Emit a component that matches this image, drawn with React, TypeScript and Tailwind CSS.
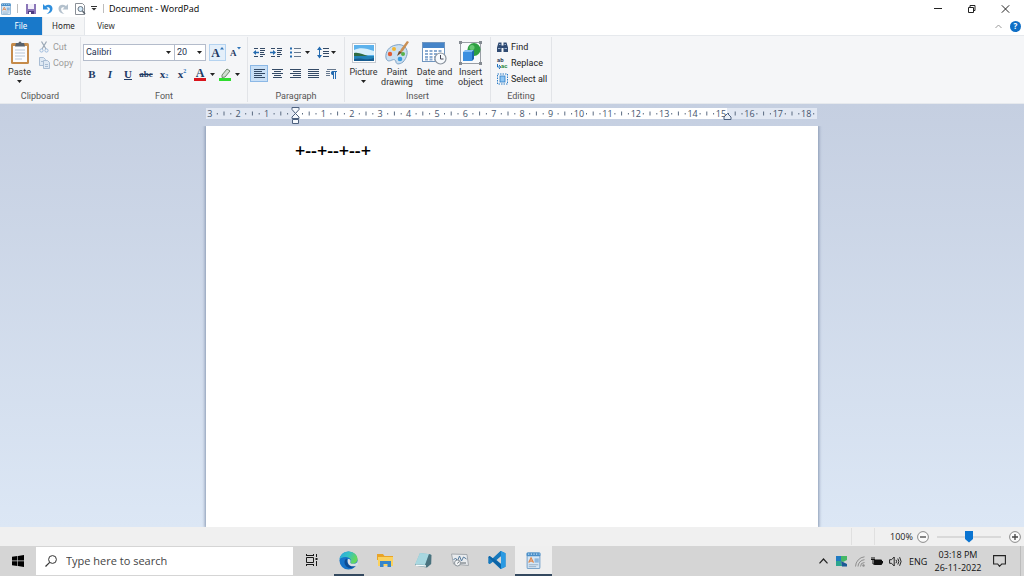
import { useState, type ReactNode } from "react";

type IconProps = { w: number; h: number; box?: string; children: ReactNode };

function Icon({ w, h, box, children }: IconProps) {
  return (
    <svg width={w} height={h} viewBox={box ?? `0 0 ${w} ${h}`} fill="none" aria-hidden className="shrink-0">
      {children}
    </svg>
  );
}

function Caret() {
  return (
    <Icon w={5} h={3}>
      <path d="M0 0h5L2.5 3z" fill="#222" />
    </Icon>
  );
}

/* ---------- title bar ---------- */

function WordPadIcon({ size }: { size: number }) {
  return (
    <Icon w={size} h={size} box="0 0 16 16">
      <rect x="2" y="1" width="12" height="14.5" rx="1" fill="#d5e6f5" stroke="#7aa5cb" />
      <rect x="1.500" y="0.5" width="13" height="3.5" rx="1" fill="#4a8fc9" />
      <path d="M3 2h1M5.500 2h1M8 2h1M10.500 2h1M13 2h.6" stroke="#d8ebfa" />
      <path d="M3.500 10 5.700 5.500 8 10M4.300 8.600h2.800" stroke="#e0874c" strokeWidth="1.100" />
      <rect x="9" y="6" width="4" height="4" fill="#8db7de" />
      <path d="M3.500 12h9M3.500 13.800h7" stroke="#8fa9c2" strokeWidth=".8" />
    </Icon>
  );
}

function TitleBar() {
  return (
    <header className="flex h-[17px] shrink-0 items-center bg-white">
      <div className="flex items-center">
        <WordPadIcon size={12} />
        <span className="ml-[5px] h-[9px] w-px bg-[#bdbdbd]" />
        <button aria-label="Save" className="ml-[7px]">
          <Icon w={12} h={12}>
            <path d="M1 1h10v10H1z" fill="#8b76b8" />
            <path d="M3 1h6v5H3z" fill="#f3f0fa" />
            <path d="M3 8h6v3H3z" fill="#4d3b80" />
            <path d="M4 9h2v2H4z" fill="#fff" />
          </Icon>
        </button>
        <button aria-label="Undo" className="ml-[5px]">
          <Icon w={11} h={12}>
            <path d="M1 1v5.500h5.500L4.600 4.600C7 3.600 8.200 5 7.800 7 7.500 8.800 6 10 4.500 11c3-.3 6-2 6-5.500C10.500 2 6.500.5 3 3z" fill="#2f8fdd" />
          </Icon>
        </button>
        <button aria-label="Redo" className="ml-[5px]">
          <Icon w={11} h={12}>
            <path d="M10 1v5.500H4.500l1.900-1.900C4 3.600 2.800 5 3.200 7c.3 1.800 1.800 3 3.300 4-3-.3-6-2-6-5.500C.5 2 4.500.5 8 3z" fill="#b4c1cd" />
          </Icon>
        </button>
        <button aria-label="Print preview" className="ml-[6px]">
          <Icon w={11} h={12}>
            <path d="M.5.5h7l2 2v9h-9z" fill="#fff" stroke="#8a8f96" />
            <circle cx="5.500" cy="6" r="2.500" fill="#d3eafa" stroke="#6c7783" />
            <path d="m7.500 8 2.500 3" stroke="#5b6570" strokeWidth="1.400" />
          </Icon>
        </button>
        <button aria-label="Customize toolbar" className="ml-[5px]">
          <Icon w={6} h={5}>
            <path d="M0 .5h6" stroke="#333" />
            <path d="M.5 2h5L3 4.500z" fill="#333" />
          </Icon>
        </button>
        <span className="ml-[6px] h-[9px] w-px bg-[#bdbdbd]" />
      </div>
      <h1 className="ml-[5px] text-[9px] leading-3 text-black">Document - WordPad</h1>
      <div className="ml-auto flex items-center gap-[25px] pr-[14px]">
        <button aria-label="Minimize">
          <Icon w={8} h={8}>
            <path d="M0 3.500h8" stroke="#222" />
          </Icon>
        </button>
        <button aria-label="Restore">
          <Icon w={9} h={8}>
            <path d="M1.500 2.500h5v5h-5zM3 2V.5h5v5H7" stroke="#222" />
          </Icon>
        </button>
        <button aria-label="Close">
          <Icon w={9} h={8}>
            <path d="m.8.3 7.400 7.400M8.200.3.800 7.700" stroke="#222" />
          </Icon>
        </button>
      </div>
    </header>
  );
}

function Tabs() {
  return (
    <nav className="flex h-[18px] shrink-0 items-stretch bg-white font-['Noto_Sans','Open_Sans',sans-serif] text-[8px]">
      <button className="w-[42px] bg-[#1979ca] text-white">File</button>
      <button className="w-[43px] border-x border-[#e3e6ea] bg-[#f5f6f7] text-[#222]">Home</button>
      <button className="w-[42px] text-[#333]">View</button>
      <div className="ml-auto flex items-center gap-[8px] pr-[3px]">
        <button aria-label="Minimize ribbon">
          <Icon w={7} h={5}>
            <path d="m.5 4 3-3 3 3" stroke="#999" />
          </Icon>
        </button>
        <button aria-label="Help" className="flex size-[11px] items-center justify-center rounded-full bg-[#0f6fc6] text-[8px] font-bold leading-none text-white">
          ?
        </button>
      </div>
    </nav>
  );
}

/* ---------- ribbon ---------- */

function Group({ title, className, children }: { title: string; className: string; children: ReactNode }) {
  return (
    <section aria-label={title} className={`flex shrink-0 flex-col border-r border-[#e2e4e8] ${className}`}>
      <div className="h-[55px]">{children}</div>
      <h2 className="text-center leading-[11px] text-[#555]">{title}</h2>
    </section>
  );
}

function BigButton({ icon, lines, caret, className }: { icon: ReactNode; lines: string[]; caret?: boolean; className: string }) {
  return (
    <button className={`flex flex-col items-center pt-[4px] leading-[10px] text-[#333] ${className}`}>
      <span className="flex h-[26px] items-start">{icon}</span>
      {lines.map((line) => (
        <span key={line} className="whitespace-nowrap">{line}</span>
      ))}
      {caret && <span className="pt-[3px]"><Caret /></span>}
    </button>
  );
}

function Clipboard() {
  return (
    <Group title="Clipboard" className="w-[81px]">
      <div className="flex">
        <BigButton
          className="w-[39px]"
          lines={["Paste"]}
          caret
          icon={
            <Icon w={20} h={24}>
              <rect x="1" y="2" width="18" height="21" rx="1.500" fill="#c58b4a" />
              <rect x="3" y="5" width="14" height="16" fill="#fbfcfe" />
              <path d="M5 9h10M5 12h10M5 15h10M5 18h7" stroke="#b9c8d8" />
              <path d="M6 2h2.500a1.500 1.500 0 0 1 3 0H14l1 3.500H5z" fill="#59626c" />
            </Icon>
          }
        />
        <div className="flex flex-col gap-[4px] pt-[4px] leading-3 text-[#9b9b9b]">
          <button disabled className="flex items-center gap-[4px]">
            <Icon w={10} h={12}>
              <path d="M2.500.5 7 8M7.500.5 3 8" stroke="#9aa7b5" strokeWidth="1.200" />
              <circle cx="2.500" cy="9.500" r="1.600" stroke="#9dbbdc" />
              <circle cx="7.500" cy="9.500" r="1.600" stroke="#9dbbdc" />
            </Icon>
            Cut
          </button>
          <button disabled className="flex items-center gap-[3px]">
            <Icon w={11} h={12}>
              <path d="M.5.500h4l2 2v6h-6z" fill="#dfe9f4" stroke="#a9bdd4" />
              <path d="M4.500 3.500h4l2 2v6h-6z" fill="#dfe9f4" stroke="#a9bdd4" />
              <path d="M6 7.500h3M6 9.500h3M2 4.500h2" stroke="#a9bdd4" />
            </Icon>
            Copy
          </button>
        </div>
      </div>
    </Group>
  );
}

function Combo({ label, value, options, className }: { label: string; value: string; options: string[]; className: string }) {
  return (
    <label className={`relative block h-[17px] border border-[#b4bccb] bg-white ${className}`}>
      <select
        aria-label={label}
        defaultValue={value}
        className="block h-full w-full appearance-none bg-transparent pl-[2px] leading-[15px] text-[#1e3250] outline-none"
      >
        {options.map((o) => (
          <option key={o}>{o}</option>
        ))}
      </select>
      <span className="pointer-events-none absolute inset-y-0 right-[3px] flex items-center">
        <Caret />
      </span>
    </label>
  );
}

const glyph = "flex h-[16px] w-[18px] items-center justify-center font-['Liberation_Serif',serif] text-[11px] font-bold leading-none text-[#1f3b64]";

function FontGroup() {
  return (
    <Group title="Font" className="w-[167px]">
      <div className="flex items-center pl-[2px] pt-[7px]">
        <Combo label="Font family" value="Calibri" options={["Calibri", "Arial", "Cambria"]} className="w-[92px]" />
        <Combo label="Font size" value="20" options={["11", "16", "20", "24"]} className="-ml-px w-[32px]" />
        <button aria-label="Grow font" className="ml-[3px] flex h-[17px] w-[17px] items-start justify-center border border-[#b5d3f0] bg-[#e4effa] pt-px font-['Liberation_Serif',serif] text-[12px] font-bold leading-[14px] text-[#1f3b64]">
          A
          <Icon w={4} h={4}><path d="M0 3.500 2 1l2 2.500z" fill="#2f75b8" /></Icon>
        </button>
        <button aria-label="Shrink font" className="ml-[4px] flex h-[17px] items-start pt-[3px] font-['Liberation_Serif',serif] text-[9px] font-bold leading-[13px] text-[#1f3b64]">
          A
          <Icon w={4} h={4}><path d="M0 0h4L2 2.500z" fill="#2f75b8" /></Icon>
        </button>
      </div>
      <div className="flex items-center pl-[2px] pt-[5px]">
        <button aria-label="Bold" className={glyph}>B</button>
        <button aria-label="Italic" className={`${glyph} italic`}>I</button>
        <button aria-label="Underline" className={`${glyph} underline`}>U</button>
        <button aria-label="Strikethrough" className="flex h-[16px] w-[18px] items-center justify-center font-['Liberation_Serif',serif] text-[9px] font-bold leading-none text-[#1f3b64] line-through">abc</button>
        <button aria-label="Subscript" className={glyph}>x<sub className="text-[6px] text-[#2f75b8]">2</sub></button>
        <button aria-label="Superscript" className={glyph}>x<sup className="text-[6px] text-[#2f75b8]">2</sup></button>
        <button aria-label="Text color" className="ml-[3px] flex items-center gap-[4px]">
          <span className="flex h-[13px] w-[12px] items-end justify-center border-b-[3px] border-[#d9141c] font-['Liberation_Serif',serif] text-[12px] font-bold leading-[10px] text-[#1f3b64]">A</span>
          <Caret />
        </button>
        <button aria-label="Text highlight color" className="ml-[4px] flex items-center gap-[4px]">
          <Icon w={12} h={13}>
            <path d="M0 10h12v3H0z" fill="#2fdc2f" />
            <path d="m3 7 5-6 3 2-5 6-3 .5z" fill="#d3dfd3" stroke="#71866f" />
          </Icon>
          <Caret />
        </button>
      </div>
    </Group>
  );
}

function AlignIcon({ d }: { d: string }) {
  return (
    <Icon w={11} h={9}>
      <path d={d} stroke="#344a66" />
    </Icon>
  );
}

const alignments = [
  { name: "Align left", d: "M0 .5h11M0 2.500h8M0 4.500h11M0 6.500h8M0 8.500h11" },
  { name: "Center", d: "M0 .5h11M2 2.500h7M0 4.500h11M2 6.500h7M1 8.500h9" },
  { name: "Align right", d: "M0 .5h11M3 2.500h8M0 4.500h11M3 6.500h8M0 8.500h11" },
  { name: "Justify", d: "M0 .5h11M0 2.500h11M0 4.500h11M0 6.500h11M0 8.500h11" },
];

function Paragraph() {
  const [active, setActive] = useState("Align left");
  return (
    <Group title="Paragraph" className="w-[97px]">
      <div className="flex h-[24px] items-center pl-[5px] pt-[7px]">
        <button aria-label="Decrease indent">
          <Icon w={13} h={11}>
            <path d="M1 1.500h4M7 1.500h5M7 3.500h5M7 5.500h4M7 7.500h5M1 9.500h4M7 9.500h3" stroke="#344a66" />
            <path d="M0 5.500 3 3v1.700h3v1.600H3V8z" fill="#246bb0" />
          </Icon>
        </button>
        <button aria-label="Increase indent" className="ml-[4px]">
          <Icon w={13} h={11}>
            <path d="M1 1.500h4M7 1.500h5M7 3.500h5M7 5.500h4M7 7.500h5M1 9.500h4M7 9.500h3" stroke="#344a66" />
            <path d="M6 5.500 3 3v1.700H0v1.600h3V8z" fill="#246bb0" />
          </Icon>
        </button>
        <button aria-label="Start a list" className="ml-[7px] flex items-center gap-[4px]">
          <Icon w={11} h={11}>
            <path d="M0 1.500h2M0 5.500h2M0 9.500h2" stroke="#246bb0" strokeWidth="2" />
            <path d="M4 1.500h7M4 5.500h7M4 9.500h7" stroke="#66788e" />
          </Icon>
          <Caret />
        </button>
        <button aria-label="Line spacing" className="ml-[7px] flex items-center gap-[2px]">
          <Icon w={12} h={13}>
            <path d="M0 4 2.500.5 5 4zM0 9l2.500 3.500L5 9z" fill="#246bb0" />
            <path d="M2.500 3v7" stroke="#246bb0" />
            <path d="M6 2.500h6M6 5.500h6M6 7.500h6M6 10.500h6" stroke="#344a66" />
          </Icon>
          <Caret />
        </button>
      </div>
      <div className="flex items-center pl-[2px] pt-[4px]">
        {alignments.map((a) => (
          <button
            key={a.name}
            aria-label={a.name}
            aria-pressed={active === a.name}
            onClick={() => setActive(a.name)}
            className="flex h-[17px] w-[18px] items-center justify-center border border-transparent aria-pressed:border-[#8cb8e6] aria-pressed:bg-[#c9e0f7]"
          >
            <AlignIcon d={a.d} />
          </button>
        ))}
        <button aria-label="Paragraph settings" className="flex w-[18px] justify-center">
          <Icon w={11} h={11}>
            <path d="M1 1.500h9M0 3.500h4M0 5.500h4M0 7.500h4" stroke="#66788e" />
            <path d="M7.500 3v8M9.500 3v8M6 3.500h5" stroke="#246bb0" />
            <path d="M5 5a2 2 0 0 1 2.500-2v4A2 2 0 0 1 5 5z" fill="#246bb0" />
          </Icon>
        </button>
      </div>
    </Group>
  );
}

function Insert() {
  return (
    <Group title="Insert" className="w-[146px]">
      <div className="flex pl-[2px]">
        <BigButton
          className="w-[33px]"
          lines={["Picture"]}
          caret
          icon={
            <Icon w={24} h={24}>
              <rect x=".5" y="2.500" width="23" height="19" fill="#fff" stroke="#c4c9d0" />
              <path d="M2 4h20v16H2z" fill="#5db2ec" />
              <path d="M2 9c6-3 12-2 20 1v4H2z" fill="#d7effb" />
              <path d="M2 12c6-1 9 2 14 3H2z" fill="#2f6c43" />
              <path d="M2 15h20v5H2z" fill="#2383b8" />
              <path d="M2 18c7-2 13 2 20-1v3H2z" fill="#185c90" />
            </Icon>
          }
        />
        <BigButton
          className="w-[34px]"
          lines={["Paint", "drawing"]}
          icon={
            <Icon w={24} h={24}>
              <path d="M11 4C4 5 0 11 1 17c1 4 4 3 6 2s4 0 4 2 3 3 7 0c4-4 6-11 2-15-2-2-5-3-9-2z" fill="#cbdff1" stroke="#7fa3c5" />
              <circle cx="5" cy="13" r="2.200" fill="#e25c35" />
              <circle cx="9" cy="8" r="2" fill="#f2b632" />
              <circle cx="15" cy="18" r="2.300" fill="#3a9bdc" />
              <circle cx="18" cy="13" r="2" fill="#57b24a" />
              <path d="m13 14 3-6 6-8 2 1-6 9z" fill="#c98f54" />
              <path d="m12 15 2-5 3 1.500z" fill="#754a26" />
            </Icon>
          }
        />
        <BigButton
          className="w-[41px]"
          lines={["Date and", "time"]}
          icon={
            <Icon w={25} h={24}>
              <rect x=".5" y="1.500" width="22" height="19" fill="#fff" stroke="#7096c0" />
              <path d="M1 2h21v5H1z" fill="#4584c8" />
              <path d="M3 10h17M3 13h17M3 16h12M3 18.500h10" stroke="#8bacd2" strokeWidth="2" strokeDasharray="3 1.500" />
              <circle cx="18.500" cy="17.500" r="5.500" fill="#f6f9fc" stroke="#8a939e" strokeWidth="1.200" />
              <path d="M18.500 14v4h3" stroke="#445" />
            </Icon>
          }
        />
        <BigButton
          className="w-[31px]"
          lines={["Insert", "object"]}
          icon={
            <Icon w={23} h={24}>
              <path d="M1.500 1.500h20v21h-20z" fill="#f8fafc" stroke="#9a9fa6" />
              <circle cx="15" cy="8.500" r="6.500" fill="#2ea043" />
              <circle cx="13" cy="6.500" r="2.500" fill="#67c873" />
              <path d="m4 11 2-2h9l-2 2z" fill="#83bdf2" />
              <path d="M4 11h9v9H4z" fill="#3b8fe0" />
              <path d="m13 11 2-2v9l-2 2z" fill="#1d65b2" />
              <path d="M0 0h3v3H0zM20 0h3v3h-3zM0 21h3v3H0zM20 21h3v3h-3z" fill="#858b92" />
            </Icon>
          }
        />
      </div>
    </Group>
  );
}

function Editing() {
  return (
    <Group title="Editing" className="w-[61px]">
      <div className="flex flex-col items-start gap-[4px] pl-[6px] pt-[4px] leading-3 text-[#222]">
        <button className="flex items-center gap-[3px]">
          <Icon w={11} h={12}>
            <path d="M1.500 1.500h3v3h2v-3h3l1.500 5V11H6.500V7h-2v4H0V6.500z" fill="#2f4a72" />
            <path d="M1 7.500h2.500M7.500 7.500H10M2 3.500h1.500M7.500 3.500H9" stroke="#9bb3d3" />
          </Icon>
          Find
        </button>
        <button className="flex items-center gap-[3px]">
          <span aria-hidden className="flex h-[12px] w-[11px] flex-col justify-center text-[6px] font-bold leading-[6px]">
            <span className="text-left text-[#33435a]">ab</span>
            <span className="flex items-center text-[#2b8a3e]">
              <Icon w={4} h={5}><path d="M.5 0v3H3M2 1l1.800 2L2 5" stroke="#1e73c0" /></Icon>
              ac
            </span>
          </span>
          Replace
        </button>
        <button className="flex items-center gap-[3px]">
          <Icon w={11} h={12}>
            <rect x=".5" y="1" width="10" height="10" stroke="#2d7dc6" strokeDasharray="1.500 1" />
            <rect x="3" y="3" width="5" height="6" fill="#8dc5f3" stroke="#2d7dc6" strokeWidth=".8" />
          </Icon>
          Select all
        </button>
      </div>
    </Group>
  );
}

function Ribbon() {
  return (
    <div className="flex h-[69px] shrink-0 items-stretch border-b border-t border-[#e6e9ed] bg-[#f5f6f8] py-px font-['Roboto',sans-serif] text-[9px]">
      <Clipboard />
      <FontGroup />
      <Paragraph />
      <Insert />
      <Editing />
    </div>
  );
}

/* ---------- document ---------- */

const RULER_CM = 28.4;
const RULER_ZERO = 89;

function Ruler() {
  const marks = Array.from({ length: 22 }, (_, i) => i - 3);
  return (
    <svg width="612" height="22" viewBox="0 0 612 22" role="img" aria-label="Ruler" className="block shrink-0">
      <rect x="0" y="4" width="611" height="11" fill="#e2e8f3" />
      <rect x={RULER_ZERO} y="4" width="432" height="11" fill="#fff" />
      {marks.map((n) => {
        const x = RULER_ZERO + n * RULER_CM;
        return (
          <g key={n}>
            {n !== 0 && (
              <text x={x} y="13" textAnchor="middle" fontSize="9" fill="#44546c">{Math.abs(n)}</text>
            )}
            <path d={`M${x + 7.500} 9v1.500`} stroke="#5a6a80" />
            {n < 18 && <path d={`M${x + 14.200} 7.500v4M${x + 21} 9v1.500`} stroke="#5a6a80" />}
          </g>
        );
      })}
      <path d="M86 3.500h7v2l-3.500 4-3.500-4zM86 14.500v-1.500l3.500-3.500 3.500 3.500v1.500zM86.500 15.500h6v4h-6z" fill="#f6f9fd" stroke="#4c607e" />
      <path d="M518 15.500v-2.500l3.500-3.500 3.500 3.500v2.500z" fill="#e8eef7" stroke="#4c607e" />
    </svg>
  );
}

function Workspace() {
  return (
    <main className="flex min-h-0 flex-1 flex-col items-center overflow-hidden bg-linear-to-b from-[#c5cfe1] to-[#dce7f5]">
      <Ruler />
      <div className="flex w-full flex-1 justify-center overflow-hidden">
        <div
          role="textbox"
          aria-label="Document"
          contentEditable
          suppressContentEditableWarning
          className="w-[612px] max-w-full bg-white pl-[89px] pt-[12px] text-[18px] font-semibold leading-6 text-black shadow-[0_0_3px_1px_#8797b0] outline-none"
        >
          +--+--+--+
        </div>
      </div>
    </main>
  );
}

function StatusBar() {
  return (
    <footer className="flex h-[19px] shrink-0 items-center justify-end bg-[#f0f0f0] pr-[3px] text-[9px] text-[#222]">
      <span className="h-[17px] w-[24px] border-x border-[#e0e0e0]" />
      <label htmlFor="zoom" className="ml-[15px] w-[22px]">100%</label>
      <button aria-label="Zoom out" className="ml-[5px]">
        <Icon w={12} h={12}>
          <circle cx="6" cy="6" r="5.400" fill="#fafafa" stroke="#8a8a8a" />
          <path d="M3 6h6" stroke="#444" strokeWidth="1.300" />
        </Icon>
      </button>
      <input
        id="zoom"
        type="range"
        min={0}
        max={100}
        defaultValue={50}
        className="mx-[8px] h-[13px] w-[64px] appearance-none bg-transparent [&::-webkit-slider-runnable-track]:h-[2px] [&::-webkit-slider-runnable-track]:bg-[#d9d9d9] [&::-webkit-slider-thumb]:-mt-[5px] [&::-webkit-slider-thumb]:h-[12px] [&::-webkit-slider-thumb]:w-[8px] [&::-webkit-slider-thumb]:appearance-none [&::-webkit-slider-thumb]:bg-[#0a74d1] [&::-webkit-slider-thumb]:[clip-path:polygon(0_0,100%_0,100%_70%,50%_100%,0_70%)]"
      />
      <button aria-label="Zoom in">
        <Icon w={12} h={12}>
          <circle cx="6" cy="6" r="5.400" fill="#fafafa" stroke="#8a8a8a" />
          <path d="M3 6h6M6 3v6" stroke="#444" strokeWidth="1.300" />
        </Icon>
      </button>
    </footer>
  );
}

/* ---------- taskbar ---------- */

const apps = [
  {
    name: "Task View",
    state: "",
    icon: (
      <Icon w={13} h={12}>
        <path d="M1.500 3.500h7v5h-7zM1.500 0v2M8.500 0v2M1.500 1.500h7M1.500 12v-2M8.500 12v-2M1.500 10.500h7M11.500 0v3M11.500 7v5" stroke="#1a1a1a" />
        <path d="M10.500 4h2v2h-2z" fill="#1a1a1a" />
      </Icon>
    ),
  },
  {
    name: "Microsoft Edge",
    state: "running",
    icon: (
      <Icon w={19} h={19} box="0 0 20 20">
        <defs>
          <linearGradient id="edgeTop" x1="0" y1="0" x2="1" y2=".4">
            <stop stopColor="#2aa5e2" />
            <stop offset=".5" stopColor="#34c1c6" />
            <stop offset="1" stopColor="#66d85a" />
          </linearGradient>
        </defs>
        <circle cx="10" cy="10" r="9.500" fill="#1673c8" />
        <path d="M.5 9C1 4 5 .5 10 .5c6 0 9.500 4 9.500 8 0 3-2.500 5-5 5-2 0-3-.8-2.500-1.600C13.500 10 12 7 8.500 6.500 5 6 1.500 7 .5 9z" fill="url(#edgeTop)" />
        <path d="M8.500 8C5 9 5 14 8 16.500c3 2.200 7 1.500 9.500-1-3 1.200-6.500.5-8-2C8.500 12 8 10 8.500 8z" fill="#0d4b93" />
        <path d="M9.500 8.500c2-.5 3.300 1.500 2.500 3-.6 1 .5 2 2.500 2 2 0 4-.8 4.800-2.300L20 15l-2 .5c-3.500 1.300-7.500.5-8.600-3-.4-1.500-.4-3 .1-4z" fill="#d9dfe5" />
      </Icon>
    ),
  },
  {
    name: "File Explorer",
    state: "",
    icon: (
      <Icon w={17} h={15}>
        <path d="M0 1h6l1.500 2H16v4H0z" fill="#e9a427" />
        <path d="M1 4h15v9H1z" fill="#fbd25f" />
        <path d="M3 8h11v6h-3.500v-3h-4v3H3z" fill="#3585ca" />
      </Icon>
    ),
  },
  {
    name: "Notepad",
    state: "",
    icon: (
      <Icon w={18} h={17}>
        <path d="M6 1 17 2.500 13 15 1 13z" fill="#7fb9c6" />
        <path d="M6 1 15 2 11 13 1 12.500z" fill="#a7d7e0" />
        <path d="M1 12.500 11 13l4-11 2.500 1-.3 9L13 15.500 3 14z" fill="#49727e" />
        <path d="m2 13.200 10 .8" stroke="#f5fafb" strokeWidth="1.400" />
      </Icon>
    ),
  },
  {
    name: "Task Manager",
    state: "",
    icon: (
      <Icon w={18} h={16}>
        <path d="M.5 2 16 2.500l1.500 11-15-1.500z" fill="#e8ebee" stroke="#a3a8ad" />
        <path d="m2.500 8 2-2 2 3 2-5 2 5 2-4 3 2" stroke="#557a9c" />
        <circle cx="6.500" cy="11" r="3" fill="#f4f6f7" stroke="#8a9299" />
        <path d="m6.500 11.500 1.500-2M10 11h5" stroke="#60686f" />
      </Icon>
    ),
  },
  {
    name: "Visual Studio Code",
    state: "",
    icon: (
      <Icon w={18} h={18}>
        <path d="M12.500 0 17.500 2.300v13.400L12.500 18l-8-7.500L1.700 13 .3 12V6l1.400-1L4.500 7.500zM13 5 8.500 9l4.500 4z" fill="#1779bd" fillRule="evenodd" />
        <path d="M.3 12 13 0v5L1.700 13z" fill="#1779bd" />
        <path d="m.3 6 1.400-1L13 13v5z" fill="#0d64a6" />
        <path d="M13 0v18l4.500-2.300V2.300z" fill="#2a9ae3" />
      </Icon>
    ),
  },
  { name: "WordPad", state: "active", icon: <WordPadIcon size={17} /> },
];

function Taskbar() {
  return (
    <div className="flex h-[30px] shrink-0 items-stretch bg-[#d5d5d5]">
      <button aria-label="Start" className="flex w-[36px] items-center justify-center">
        <Icon w={12} h={12}>
          <path d="M0 1.700 5.400 1v4.600H0zM6 .9l6-.9v5.600H6zM0 6.300h5.400V11L0 10.300zM6 6.300h6V12l-6-.9z" fill="#000" />
        </Icon>
      </button>
      <label className="my-px flex w-[257px] items-center gap-[9px] bg-white pl-[9px]">
        <Icon w={12} h={12}>
          <circle cx="7.500" cy="4.500" r="3.900" stroke="#333" />
          <path d="M4.700 7.300.5 11.500" stroke="#333" strokeWidth="1.200" />
        </Icon>
        <input
          type="text"
          aria-label="Search"
          placeholder="Type here to search"
          className="min-w-0 flex-1 bg-transparent text-[11px] outline-none placeholder:text-[#444]"
        />
      </label>
      {apps.map((app) => (
        <button
          key={app.name}
          aria-label={app.name}
          data-state={app.state}
          className="group flex w-[37px] flex-col items-center data-[state=active]:bg-[#efefef]"
        >
          <span className="flex flex-1 items-center">{app.icon}</span>
          <span className="h-[2px] group-data-[state=active]:w-full group-data-[state=active]:bg-[#34495f] group-data-[state=running]:w-[30px] group-data-[state=running]:bg-[#34495f]" />
        </button>
      ))}
      <div className="ml-auto flex items-center text-[9px] leading-[13px] text-[#111]">
        <button aria-label="Show hidden icons">
          <Icon w={9} h={6}><path d="m.5 5.300 4-4.300 4 4.300" stroke="#222" strokeWidth="1.200" /></Icon>
        </button>
        <span className="ml-[8px]">
          <Icon w={11} h={12}>
            <path d="M0 1h5v5H0z" fill="#1f7ac2" />
            <path d="M5 1h6v4L7 7 5 6z" fill="#45b865" />
            <path d="M0 6h5l1 5H0z" fill="#2ba58f" />
            <path d="m5 6 6 3v2.500H6z" fill="#1c5a96" />
          </Icon>
        </span>
        <span className="ml-[8px]">
          <Icon w={10} h={11}>
            <path d="M.5 10.500A10 10 0 0 1 9.500.8M3 10.500a7 7 0 0 1 6.500-6.800M5.500 10.500a4 4 0 0 1 4-4" stroke="#8f8f8f" />
            <circle cx="8.500" cy="9.500" r="1.200" fill="#8f8f8f" />
          </Icon>
        </span>
        <span className="ml-[6px]">
          <Icon w={12} h={9}>
            <path d="M3.500 3h7v4.500h-7z" fill="#111" stroke="#111" />
            <path d="M11.500 4v2.500M0 2.500h4M1 0v2M3 0v2M2 3v4h2" stroke="#111" />
          </Icon>
        </span>
        <span className="ml-[6px]">
          <Icon w={13} h={11}>
            <path d="M.6 3.700h2L5.200 1v9L2.600 7.300h-2z" stroke="#222" />
            <path d="M7 3.800q1.200 1.700 0 3.400M8.800 2.500q2 3 0 6M10.600 1.200q3 4.300 0 8.600" stroke="#222" />
          </Icon>
        </span>
        <span className="ml-[7px] w-[18px]">ENG</span>
        <div className="ml-[8px] flex w-[46px] flex-col items-center whitespace-nowrap">
          <span>03:18 PM</span>
          <span>26-11-2022</span>
        </div>
        <button aria-label="Notifications" className="ml-[12px]">
          <Icon w={13} h={12}>
            <path d="M.6.600h11.800v8.400H8.700L6.500 11.300 4.700 9H.6z" stroke="#222" strokeWidth="1.100" />
          </Icon>
        </button>
        <span className="ml-[14px] h-full w-px bg-[#bcbcbc]" />
        <span className="w-[3px]" />
      </div>
    </div>
  );
}

export default function App() {
  return (
    <div className="flex h-screen flex-col overflow-hidden font-['Open_Sans',sans-serif]">
      <TitleBar />
      <Tabs />
      <Ribbon />
      <Workspace />
      <StatusBar />
      <Taskbar />
    </div>
  );
}
